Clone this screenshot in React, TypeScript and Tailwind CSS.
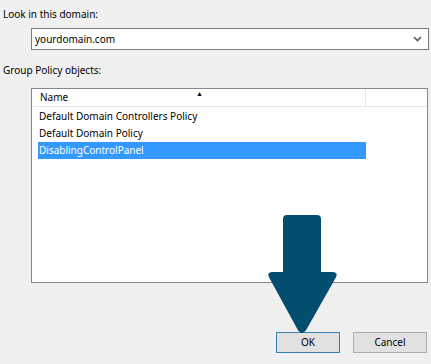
const font = { fontFamily: '"Noto Sans", "Open Sans", Arial, sans-serif' }

function ComboBox({ value }: { value: string }) {
  return (
    <div className="ml-[31px] mr-[2px] flex h-[22px] items-center justify-between border border-[#7a7a7a] bg-white pl-[3px] pr-[6px] text-[10px] text-black">
      <span>{value}</span>
      <svg width="9" height="6" viewBox="0 0 9 6">
        <path d="M1 1 L4.5 4.5 L8 1" fill="none" stroke="#5a5a5a" strokeWidth="1.6" />
      </svg>
    </div>
  )
}

function PolicyList({ items, selected }: { items: string[]; selected: string }) {
  return (
    <div className="ml-[31px] mr-[3px] h-[195px] border border-[#828790] bg-white pl-[1px] pt-0">
      <div className="flex h-[18px] border-b border-[#e5e5e5]">
        <div className="relative ml-[1px] flex w-[332px] items-center border-r border-[#e5e5e5] pl-[6px] text-[10px] text-black">
          Name
          <span className="absolute left-[162px] top-[1px] text-[7px] leading-none text-black">▲</span>
        </div>
      </div>
      <div className="pl-[5px] pt-[1px]">
        {items.map((it) => (
          <div
            key={it}
            className={
              'flex h-[17px] w-[328px] items-center pl-[1px] text-[10px] ' +
              (it === selected ? 'bg-[#3399ff] text-white' : 'text-black')
            }
          >
            {it}
          </div>
        ))}
      </div>
    </div>
  )
}

export default function App() {
  const items = ['Default Domain Controllers Policy', 'Default Domain Policy', 'DisablingControlPanel']

  return (
    <div className="relative h-[364px] w-[431px] overflow-hidden bg-[#f0f0f0]" style={font}>
      <div className="pl-[3px] pt-[6px] text-[10px] leading-[16px] text-black">Look in this domain:</div>
      <div className="mt-[6px]">
        <ComboBox value="yourdomain.com" />
      </div>
      <div className="pl-[3px] pt-[12px] text-[10px] leading-[16px] text-black">Group Policy objects:</div>
      <div className="mt-[10px]">
        <PolicyList items={items} selected="DisablingControlPanel" />
      </div>
      <div className="mt-[49px] flex justify-end gap-[13px] pr-[4px]">
        <button className="h-[21px] w-[64px] border border-[#3c7fb1] bg-[#e1e1e1] text-[10px] text-black">OK</button>
        <button className="h-[21px] w-[74px] border border-[#adadad] bg-[#e1e1e1] text-[10px] text-black">Cancel</button>
      </div>

      {/* annotation arrow */}
      <svg className="absolute left-[266px] top-[213px]" width="74" height="123" viewBox="0 0 74 123">
        <path
          d="M21 3 H51 Q54 3 54 6 V60 H67 Q71 60 69 64 L39 117 Q36 121 33 117 L4 64 Q2 60 6 60 H18 V6 Q18 3 21 3 Z"
          fill="#034e6f"
          stroke="#034e6f"
          strokeWidth="2"
          strokeLinejoin="round"
        />
      </svg>
    </div>
  )
}
